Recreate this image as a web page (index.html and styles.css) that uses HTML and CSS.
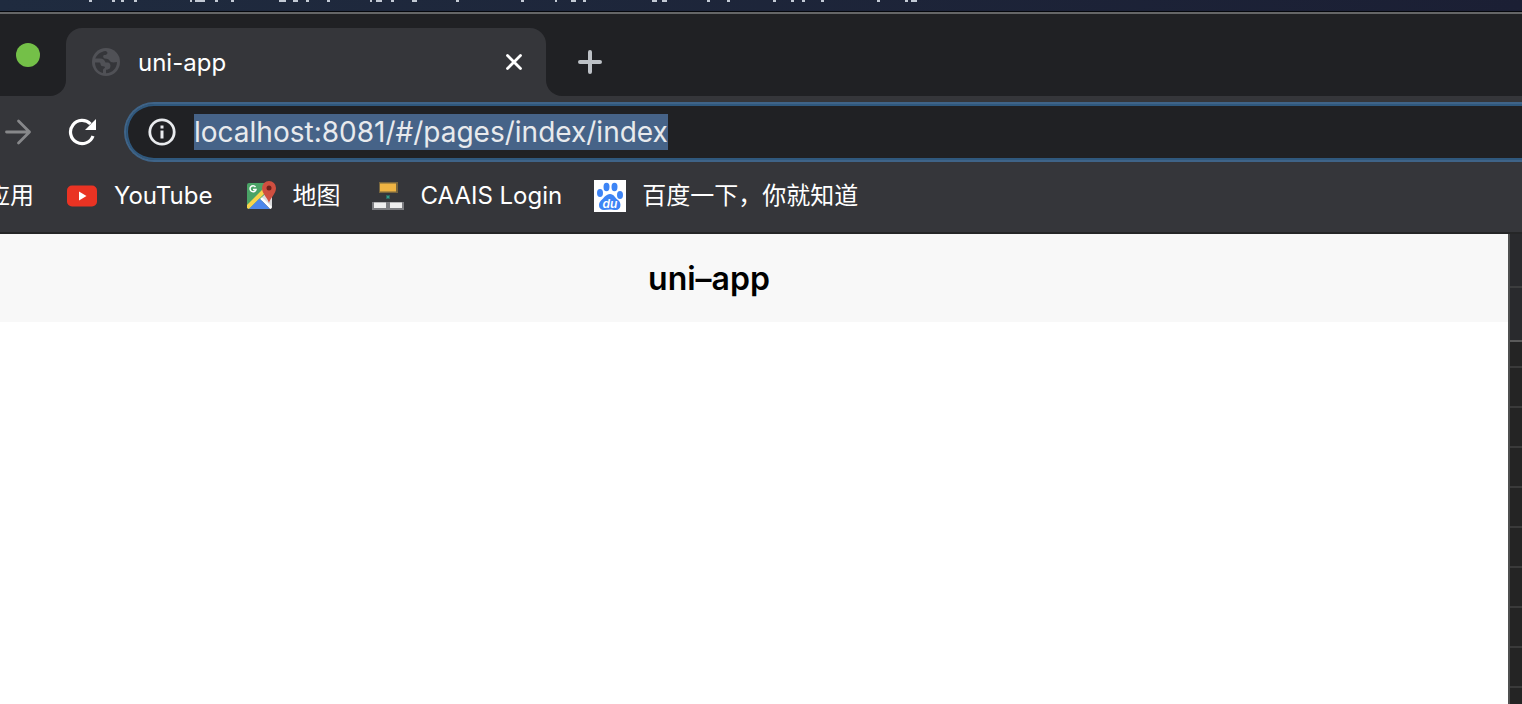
FILE: index.html
```html
<!DOCTYPE html>
<html lang="zh-CN">
<head>
    <meta charset="UTF-8">
    <title>uni-app</title>
    <meta name="viewport" content="width=device-width, initial-scale=1">
    <link rel="stylesheet" href="styles.css">
</head>
<body>
<div class="backdrop">
    <svg width="1000" height="2" viewBox="0 0 1000 2" aria-hidden="true">
        <path stroke="#c3cad5" stroke-width="2" stroke-dasharray="3 20 3 6 3 10 3 53 2 3 10 10 3 13 3 45 7 7 5 8 3 18 3 40 2 4 6 9 3 18 5 39 3 62 3 31 2 14 5 7 3 66 5 5 5 40 3 17 3 43 3 15 3 8 3 16 3 53 3 25 3 3 6 500" d="M89 1H985"/>
    </svg>
</div>
<div class="browser">
    <header>
        <div class="tab-strip">
            <div class="window-controls">
                <button class="zoom-btn" type="button" aria-label="Zoom window"></button>
            </div>
            <div class="tab-slot">
                <div class="tab">
                    <svg width="28" height="28" viewBox="0 0 28 28" aria-hidden="true">
                        <circle cx="14" cy="14" r="14" fill="#505156"/>
                        <path fill="#35363a" d="M3 11.500C4.500 7 8 3.500 14 3L15.500 4.500C15.500 6.500 14 7 12 7C10.500 7.500 11 10 12.500 10.500C15 11 16.500 10.500 17.500 12.500C18.500 14.500 21 15 25 14C25 20 20.500 25 14 25.200V21.500C17 21.500 18.500 20 18 17.500C17 15.500 14.500 16 13 15C11 13 9 11.500 3 11.500Z"/>
                        <path fill="#505156" d="M3 10.500H8C11 10.500 12.500 12 13.500 14.500H16C18.500 15 19 18 18 20C17 21.500 15.500 21.500 14 21.500V25H11V20L8 18L3 14Z"/>
                        <path fill="#35363a" d="M3 14.500H7.500C8.500 14.500 8.500 16 9 17.500C9.500 18.500 12.500 18 13 19C13 20.500 11 20.500 11 22V25C6.500 24 3 20 3 14.500Z"/>
                    </svg>
                    <span class="tab-title">uni-app</span>
                    <button class="icon-btn" type="button" aria-label="Close tab">
                        <svg width="20" height="20" viewBox="0 0 20 20">
                            <path fill="none" stroke="#fff" stroke-width="2.8" stroke-linecap="round" d="M3.5 3.5 16.5 16.5M16.5 3.5 3.5 16.5"/>
                        </svg>
                    </button>
                </div>
            </div>
            <div class="strip-rest">
                <button class="icon-btn" type="button" aria-label="New tab">
                    <svg width="24" height="24" viewBox="0 0 24 24">
                        <path fill="none" stroke="#bdc1c6" stroke-width="4" stroke-linecap="round" d="M12 2V22M2 12H22"/>
                    </svg>
                </button>
            </div>
        </div>
        <div class="toolbar">
            <button class="icon-btn" type="button" aria-label="Forward">
                <svg width="28" height="28" viewBox="0 0 28 28">
                    <path fill="none" stroke="#87888a" stroke-width="2.8" stroke-linecap="round" stroke-linejoin="round" d="M2.5 14H25.5M14.5 3 25.5 14 14.5 25"/>
                </svg>
            </button>
            <button class="icon-btn" type="button" aria-label="Reload">
                <svg width="28" height="28" viewBox="0 0 28 28">
                    <path fill="none" stroke="#fff" stroke-width="3.2" d="M22.5 6 A11.6 11.6 0 1 0 25 18"/>
                    <path fill="#fff" d="M28 1V12H17Z"/>
                </svg>
            </button>
            <label class="omnibox">
                <svg width="28" height="28" viewBox="0 0 28 28" aria-hidden="true">
                    <circle cx="14" cy="14" r="12.2" fill="none" stroke="#e8eaed" stroke-width="2.8"/>
                    <path fill="#e8eaed" d="M12.5 7.5h3v3h-3zM12.5 12.5h3v8h-3z"/>
                </svg>
                <input class="url" id="url" type="text" aria-label="Address" spellcheck="false" value="localhost:8081/#/pages/index/index">
            </label>
        </div>
        <nav class="bookmarks">
            <a class="bookmark" href="#">应用</a>
            <a class="bookmark" href="#">
                <svg width="32" height="32" viewBox="0 0 32 32" aria-hidden="true">
                    <rect x="1" y="5.500" width="30" height="21" rx="5" fill="#ea3323"/>
                    <path fill="#fff" d="M13 11.500V20.500L20.500 16Z"/>
                </svg>
                YouTube
            </a>
            <a class="bookmark" href="#">
                <svg width="32" height="32" viewBox="0 0 32 32" aria-hidden="true">
                    <path fill="#4aa366" d="M5 3H27V16L5 29Q3 29 3 27V5Q3 3 5 3Z"/>
                    <path fill="#dcdcde" d="M18 17 28 8V27Q28 29 26 29Z"/>
                    <path fill="#fff" d="M16 19 18 17 28 27 26 29Z"/>
                    <path fill="#f7d44c" d="M3 25 22 6 24 10 5 29 3 28Z"/>
                    <path fill="#4d86ec" d="M5 29 15.500 18.500 26 29Z"/>
                    <path fill="none" stroke="#fff" stroke-width="1.500" d="M11.500 7 A3 3 0 1 0 12 9.500H9"/>
                    <path fill="#cf4f40" d="M25 23C24 18 18 14 18 8A7 7 0 0 1 32 8C32 14 26 18 25 23Z"/>
                    <circle cx="25" cy="8" r="2.500" fill="#6e211b"/>
                </svg>
                地图
            </a>
            <a class="bookmark" href="#">
                <svg width="32" height="32" viewBox="0 0 32 32" aria-hidden="true">
                    <path fill="#77653e" d="M7 2H26V13H7Z"/>
                    <path fill="#efb443" d="M8 3.500H24V11.500H8Z"/>
                    <path fill="#2c665f" d="M14 15H18V19H14Z"/>
                    <path fill="#329b88" d="M15 16H17V18H15Z"/>
                    <path fill="#7c7d81" d="M0 22H32V30H0Z"/>
                    <path fill="#eee" d="M2 22.500H14V28H2ZM18 22.500H30V28H18Z"/>
                </svg>
                CAAIS Login
            </a>
            <a class="bookmark" href="#">
                <svg width="32" height="32" viewBox="0 0 32 32" aria-hidden="true">
                    <path fill="#fff" d="M0 0H32V32H0Z"/>
                    <g fill="#3d84f5">
                        <ellipse cx="6" cy="13" rx="3" ry="4"/>
                        <ellipse cx="12.500" cy="7" rx="3" ry="4.200"/>
                        <ellipse cx="20.500" cy="7" rx="3" ry="4.200"/>
                        <ellipse cx="26" cy="15" rx="3" ry="4"/>
                        <path d="M16 14C20 14 21 18 24 20C28 23 27 30 22 30C19 30 18 29.500 16 29.500S12 30 10 30C4 30 4 23 7 20.500C10 18 12 14 16 14Z"/>
                    </g>
                    <text class="du" x="16" y="28" text-anchor="middle">du</text>
                </svg>
                百度一下，你就知道
            </a>
        </nav>
    </header>
    <div class="content">
        <main class="page">
            <h1 class="page-head">uni–app</h1>
        </main>
        <aside class="devtools">
            <div class="devtools-bar"></div>
            <div class="devtools-bar devtools-tabs"></div>
            <div class="devtools-head"></div>
            <div class="devtools-rows"></div>
        </aside>
    </div>
</div>
<script>
    const url = document.getElementById('url');
    url.focus();
    url.select();
</script>
</body>
</html>
```
FILE: styles.css
```css
* {
    box-sizing: border-box;
    margin: 0;
    padding: 0;
}

body {
    display: flex;
    flex-direction: column;
    height: 100vh;
    overflow: hidden;
    background-color: #35363a;
    font-family: Inter, "Noto Sans CJK SC", sans-serif;
}

svg {
    display: block;
    flex: none;
}

.backdrop {
    flex: none;
    height: 12px;
    overflow: hidden;
    background: linear-gradient(90deg, #1f2b3f, #1b1f34);
    border-bottom: 1px solid #05070c;
}

.browser {
    flex: 1;
    display: flex;
    flex-direction: column;
    border-top: 2px solid #656667;
}

.tab-strip {
    display: flex;
    height: 82px;
    border-top: 14px solid #202124;
}

.window-controls {
    width: 66px;
    padding: 15px 0 0 16px;
    background-color: #202124;
    border-bottom-right-radius: 16px;
}

.zoom-btn {
    display: block;
    width: 24px;
    height: 24px;
    border: none;
    border-radius: 50%;
    background-color: #74c048;
}

.tab-slot {
    width: 480px;
    background: linear-gradient(#202124 50%, #35363a 50%);
}

.tab {
    display: flex;
    align-items: center;
    gap: 18px;
    height: 100%;
    padding: 0 22px 0 26px;
    border-radius: 16px 16px 0 0;
    background-color: #35363a;
}

.tab-title {
    flex: 1;
    color: #fff;
    font-size: 24px;
}

.icon-btn {
    border: none;
    background: none;
}

.strip-rest {
    flex: 1;
    display: flex;
    align-items: center;
    padding-left: 32px;
    background-color: #202124;
    border-bottom-left-radius: 16px;
}

.toolbar {
    display: flex;
    align-items: center;
    gap: 36px;
    padding: 6px 0 6px 4px;
}

.toolbar .omnibox {
    margin-left: -8px;
}

.omnibox {
    flex: 1;
    display: flex;
    align-items: center;
    gap: 18px;
    height: 60px;
    padding-left: 22px;
    border: 2px solid #3f6488;
    border-right: none;
    border-radius: 30px 0 0 30px;
    background-color: #202124;
    box-shadow: inset 0 2px #2f587d, inset 0 -2px #2f587d, inset 2px 0 #2f587d;
}

.url {
    flex: 1;
    height: 36px;
    border: none;
    outline: none;
    background: none;
    color: #e8eaed;
    font-family: inherit;
    font-size: 28px;
    line-height: 36px;
}

.url::selection {
    background-color: #466388;
    color: #e8eaed;
}

.bookmarks {
    display: flex;
    align-items: center;
    gap: 32px;
    height: 64px;
    margin-left: -14px;
    padding-bottom: 8px;
    white-space: nowrap;
}

.bookmark {
    display: flex;
    align-items: center;
    gap: 16px;
    color: #fff;
    font-size: 24px;
    line-height: 32px;
    text-decoration: none;
}

.du {
    fill: #fff;
    font-size: 12px;
    font-style: italic;
    font-weight: 600;
}

.content {
    flex: 1;
    display: flex;
    border-top: 2px solid #252627;
}

.page {
    flex: 1;
    background-color: #fff;
}

.page-head {
    padding: 2px 90px 0 0;
    background-color: #f8f8f8;
    color: #000;
    font-size: 32px;
    font-weight: 600;
    line-height: 86px;
    text-align: center;
}

.devtools {
    display: flex;
    flex-direction: column;
    width: 14px;
    border-left: 2px solid #4f5050;
    background-color: #242424;
}

.devtools-bar {
    height: 54px;
    background-color: #292a2d;
    border-bottom: 2px solid #3c3d3e;
}

.devtools-tabs {
    border-color: #5a5a5a;
}

.devtools-head {
    height: 26px;
    border-bottom: 2px solid #3a3a3a;
}

.devtools-rows {
    flex: 1;
    background: repeating-linear-gradient(#242424 0 38px, #3a3a3a 38px 40px);
}
```
